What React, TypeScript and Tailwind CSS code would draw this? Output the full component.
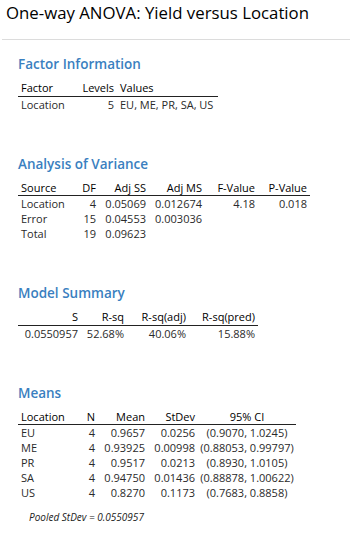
import React from "react";

type Col = { w: number; align: "left" | "right" | "center" };

const factorCols: Col[] = [
  { w: 62, align: "left" },
  { w: 37, align: "right" },
  { w: 101, align: "left" },
];

const anovaCols: Col[] = [
  { w: 60, align: "left" },
  { w: 21, align: "right" },
  { w: 50, align: "right" },
  { w: 56, align: "right" },
  { w: 53, align: "right" },
  { w: 52, align: "right" },
];

const modelCols: Col[] = [
  { w: 63, align: "right" },
  { w: 46, align: "right" },
  { w: 62, align: "right" },
  { w: 69, align: "right" },
];

const meansCols: Col[] = [
  { w: 60, align: "left" },
  { w: 20, align: "right" },
  { w: 50, align: "right" },
  { w: 50, align: "right" },
  { w: 98, align: "center" },
];

function StatTable({ cols, head, rows }: { cols: Col[]; head: string[]; rows: string[][] }) {
  const alignClass = (a: Col["align"]) =>
    a === "left" ? "text-left pl-[3px]" : a === "right" ? "text-right pr-[3px]" : "text-center";
  return (
    <table className="border-collapse table-fixed">
      <colgroup>
        {cols.map((c, i) => (
          <col key={i} style={{ width: c.w }} />
        ))}
      </colgroup>
      <thead>
        <tr className="h-[15px] border-b border-[#222]">
          {head.map((h, i) => (
            <th key={i} className={`font-medium text-black leading-[14px] whitespace-nowrap p-0 ${alignClass(cols[i].align)}`}>
              {h}
            </th>
          ))}
        </tr>
      </thead>
      <tbody>
        {rows.map((r, ri) => (
          <tr key={ri} className="h-[15px]">
            {r.map((v, i) => (
              <td key={i} className={`text-[#2a2a2a] leading-[15px] whitespace-nowrap p-0 ${alignClass(cols[i].align)}`}>
                {v}
              </td>
            ))}
          </tr>
        ))}
      </tbody>
    </table>
  );
}

function Section({ title, children, className = "" }: { title: string; children: React.ReactNode; className?: string }) {
  return (
    <div className={`pl-[18px] ${className}`}>
      <h2 className="h-5 leading-5 text-[13.5px] font-semibold text-[#3a7fc0]">{title}</h2>
      <div className="mt-[7px]">{children}</div>
    </div>
  );
}

export default function App() {
  return (
    <div className="w-[350px] h-[543px] bg-white text-[11px] overflow-hidden" style={{ fontFamily: '"Open Sans", "Noto Sans", sans-serif' }}>
      <div className="h-[40px] border-b border-[#dcdcdc] ml-[2px] pl-[4px]">
        <h1 className="text-[16.8px] leading-[26px] text-black">One-way ANOVA: Yield versus Location</h1>
      </div>

      <Section title="Factor Information" className="mt-[14px]">
        <StatTable
          cols={factorCols}
          head={["Factor", "Levels", "Values"]}
          rows={[["Location", "5", "EU, ME, PR, SA, US"]]}
        />
      </Section>

      <Section title="Analysis of Variance" className="mt-[42px]">
        <StatTable
          cols={anovaCols}
          head={["Source", "DF", "Adj SS", "Adj MS", "F-Value", "P-Value"]}
          rows={[
            ["Location", "4", "0.05069", "0.012674", "4.18", "0.018"],
            ["Error", "15", "0.04553", "0.003036", "", ""],
            ["Total", "19", "0.09623", "", "", ""],
          ]}
        />
      </Section>

      <Section title="Model Summary" className="mt-[42px]">
        <StatTable
          cols={modelCols}
          head={["S", "R-sq", "R-sq(adj)", "R-sq(pred)"]}
          rows={[["0.0550957", "52.68%", "40.06%", "15.88%"]]}
        />
      </Section>

      <Section title="Means" className="mt-[42px]">
        <StatTable
          cols={meansCols}
          head={["Location", "N", "Mean", "StDev", "95% CI"]}
          rows={[
            ["EU", "4", "0.9657", "0.0256", "(0.9070, 1.0245)"],
            ["ME", "4", "0.93925", "0.00998", "(0.88053, 0.99797)"],
            ["PR", "4", "0.9517", "0.0213", "(0.8930, 1.0105)"],
            ["SA", "4", "0.94750", "0.01436", "(0.88878, 1.00622)"],
            ["US", "4", "0.8270", "0.1173", "(0.7683, 0.8858)"],
          ]}
        />
        <p className="mt-[10px] ml-[11px] text-[10px] leading-[14px] italic text-[#222]">Pooled StDev = 0.0550957</p>
      </Section>
    </div>
  );
}
